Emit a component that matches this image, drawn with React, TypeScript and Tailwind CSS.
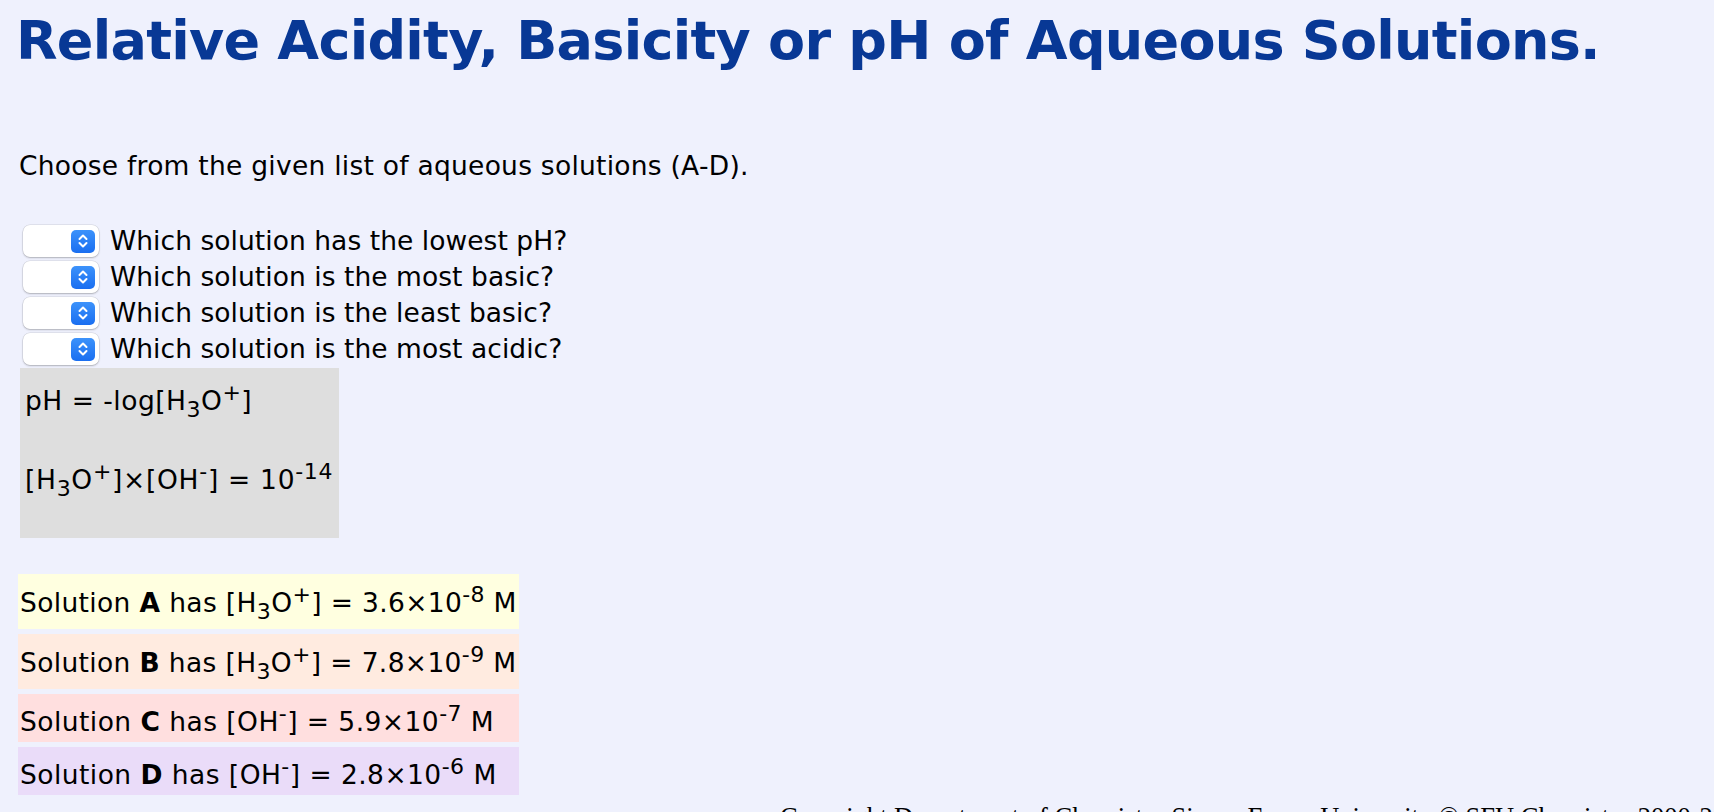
import type { ReactNode } from "react";

const Sup = ({ children }: { children: ReactNode }) => (
  <sup className="top-[-0.47em] text-[0.83em]">{children}</sup>
);

const Sub = ({ children }: { children: ReactNode }) => (
  <sub className="bottom-[-0.3em] text-[0.83em]">{children}</sub>
);

const H3O = () => (
  <>
    [H<Sub>3</Sub>O<Sup>+</Sup>]
  </>
);

const OH = () => (
  <>
    [OH<Sup>-</Sup>]
  </>
);

// mac style popup button with the blue up/down chevrons
const Picker = () => (
  <div className="flex h-[32px] w-[76px] shrink-0 items-center justify-end rounded-[7px] bg-white pr-[4px] shadow-[0_0_0_0.5px_rgba(0,0,0,0.12),0_1px_2px_rgba(0,0,0,0.22)]">
    <div className="flex h-[23px] w-[24px] items-center justify-center rounded-[5px] bg-gradient-to-b from-[#3c92fb] to-[#1a6ef0]">
      <svg width="14" height="18" viewBox="0 0 14 18" fill="none">
        <path d="M3.5 7 L7 3.5 L10.5 7" stroke="white" strokeWidth="2" strokeLinecap="round" strokeLinejoin="round" />
        <path d="M3.5 11 L7 14.5 L10.5 11" stroke="white" strokeWidth="2" strokeLinecap="round" strokeLinejoin="round" />
      </svg>
    </div>
  </div>
);

const questions = [
  "Which solution has the lowest pH?",
  "Which solution is the most basic?",
  "Which solution is the least basic?",
  "Which solution is the most acidic?",
];

export default function App() {
  return (
    <div className="h-screen w-full overflow-hidden bg-[#eff1fd] font-['DejaVu_Sans',Verdana,sans-serif] text-[26.5px] text-black">
      <h1 className="whitespace-nowrap pl-[16px] pt-[9px] text-[54px] font-bold leading-[63px] tracking-[-0.75px] text-[#083895]">
        Relative Acidity, Basicity or pH of Aqueous Solutions.
      </h1>

      <p className="mt-[78px] pl-[19px] leading-[31px] tracking-[0.25px]">
        Choose from the given list of aqueous solutions (A-D).
      </p>

      <div className="mt-[42px] flex flex-col">
        {questions.map((q) => (
          <div key={q} className="flex h-[36px] items-center gap-[11px] pl-[23px]">
            <Picker />
            <span className="leading-[36px] tracking-[0.05px]">{q}</span>
          </div>
        ))}
      </div>

      {/* formulas */}
      <div className="ml-[20px] mt-[1px] h-[170px] w-[319px] bg-[#dedede] pl-[5px] pt-[17px] leading-[31px] tracking-[0.5px]">
        <div>
          pH = -log<H3O />
        </div>
        <div className="mt-[48px] whitespace-nowrap tracking-[0.7px]">
          <H3O />×<OH /> = 10<Sup>-14</Sup>
        </div>
      </div>

      {/* solution list */}
      <div className="ml-[18px] mt-[36px] flex w-[501px] flex-col gap-[5px] leading-[31px] tracking-[0.35px]">
        <div className="h-[55px] whitespace-nowrap bg-[#ffffe0] pl-[2px] pt-[13px]">
          Solution <b>A</b> has <H3O /> = 3.6×10<Sup>-8</Sup> M
        </div>
        <div className="h-[55px] whitespace-nowrap bg-[#ffebe0] pl-[2px] pt-[13px]">
          Solution <b>B</b> has <H3O /> = 7.8×10<Sup>-9</Sup> M
        </div>
        <div className="h-[48px] whitespace-nowrap bg-[#ffdfdf] pl-[2px] pt-[12px] tracking-[0.45px]">
          Solution <b>C</b> has <OH /> = 5.9×10<Sup>-7</Sup> M
        </div>
        <div className="h-[48px] whitespace-nowrap bg-[#eadcf9] pl-[2px] pt-[12px] tracking-[0.45px]">
          Solution <b>D</b> has <OH /> = 2.8×10<Sup>-6</Sup> M
        </div>
      </div>

      <div className="mt-[7px] whitespace-nowrap pl-[780px] font-['Liberation_Serif',serif] leading-[30px]">
        Copyright Department of Chemistry Simon Fraser University © SFU Chemistry 2000-2019
      </div>
    </div>
  );
}
